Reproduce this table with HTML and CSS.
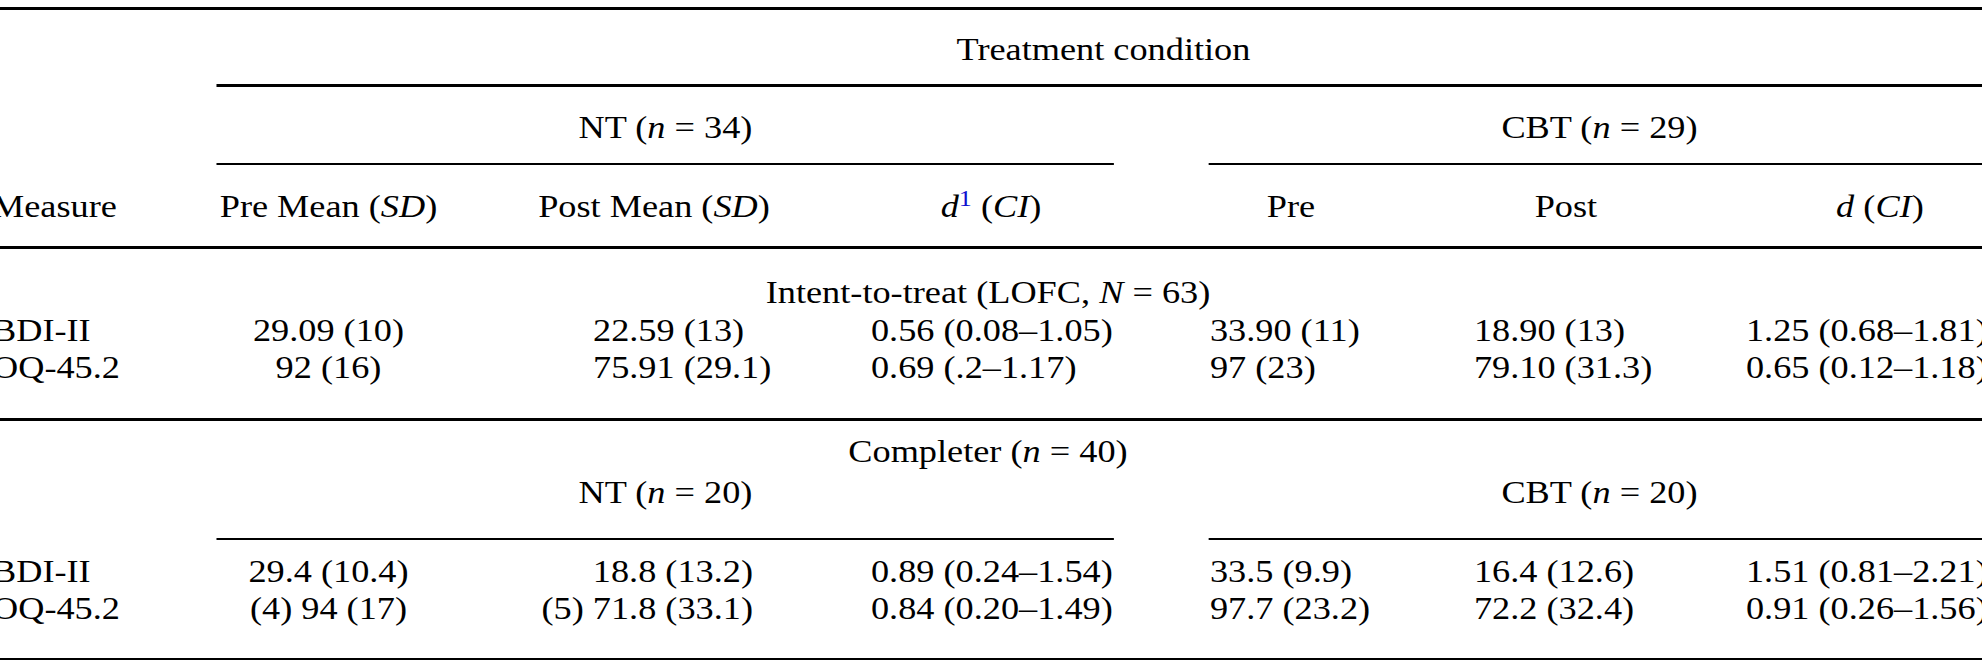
FILE: index.html
```html
<!DOCTYPE html>
<html lang="en">
<head>
<meta charset="utf-8">
<title>Treatment condition results</title>
<link rel="stylesheet" href="styles.css">
</head>
<body>
<div class="page">
  <div class="results">
    <div class="head">
      <div class="grid row-treat">
        <div class="cell"></div>
        <div class="cell span-treat ruled3">Treatment condition</div>
      </div>
      <div class="grid row-group">
        <div class="cell"></div>
        <div class="cell span-nt ruled2">NT (<i>n</i> = 34)</div>
        <div class="cell"></div>
        <div class="cell span-cbt ruled2">CBT (<i>n</i> = 29)</div>
      </div>
      <div class="grid row-cols">
        <div class="cell c-measure">Measure</div>
        <div class="cell c-center">Pre Mean (<i>SD</i>)</div>
        <div class="cell c-center">Post Mean (<i>SD</i>)</div>
        <div class="cell c-center"><i>d</i><sup class="fn">1</sup> (<i>CI</i>)</div>
        <div class="cell"></div>
        <div class="cell c-center">Pre</div>
        <div class="cell c-center h-post2">Post</div>
        <div class="cell c-center h-d2"><i>d</i> (<i>CI</i>)</div>
      </div>
    </div>

    <div class="section itt">
      <div class="caption">Intent-to-treat (LOFC, <i>N</i> = 63)</div>
      <div class="grid data first">
        <div class="cell c-measure">BDI-II</div>
        <div class="cell c-center">29.09 (10)</div>
        <div class="cell post-left">22.59 (13)</div>
        <div class="cell d-left">0.56 (0.08–1.05)</div>
        <div class="cell"></div>
        <div class="cell pre2-left">33.90 (11)</div>
        <div class="cell post2-left">18.90 (13)</div>
        <div class="cell">1.25 (0.68–1.81)</div>
      </div>
      <div class="grid data">
        <div class="cell c-measure">OQ-45.2</div>
        <div class="cell c-center">92 (16)</div>
        <div class="cell post-left">75.91 (29.1)</div>
        <div class="cell d-left">0.69 (.2–1.17)</div>
        <div class="cell"></div>
        <div class="cell pre2-left">97 (23)</div>
        <div class="cell post2-left">79.10 (31.3)</div>
        <div class="cell">0.65 (0.12–1.18)</div>
      </div>
    </div>

    <div class="section completer">
      <div class="caption">Completer (<i>n</i> = 40)</div>
      <div class="grid row-group2">
        <div class="cell"></div>
        <div class="cell span-nt ruled2">NT (<i>n</i> = 20)</div>
        <div class="cell"></div>
        <div class="cell span-cbt ruled2">CBT (<i>n</i> = 20)</div>
      </div>
      <div class="grid data first2">
        <div class="cell c-measure">BDI-II</div>
        <div class="cell c-center">29.4 (10.4)</div>
        <div class="cell post-right">18.8 (13.2)</div>
        <div class="cell d-left">0.89 (0.24–1.54)</div>
        <div class="cell"></div>
        <div class="cell pre2-left">33.5 (9.9)</div>
        <div class="cell post2-left">16.4 (12.6)</div>
        <div class="cell">1.51 (0.81–2.21)</div>
      </div>
      <div class="grid data">
        <div class="cell c-measure">OQ-45.2</div>
        <div class="cell c-center">(4) 94 (17)</div>
        <div class="cell post-right">(5) 71.8 (33.1)</div>
        <div class="cell d-left">0.84 (0.20–1.49)</div>
        <div class="cell"></div>
        <div class="cell pre2-left">97.7 (23.2)</div>
        <div class="cell post2-left">72.2 (32.4)</div>
        <div class="cell">0.91 (0.26–1.56)</div>
      </div>
    </div>
  </div>
</div>
</body>
</html>
```

FILE: styles.css
```css
html, body {
  margin: 0;
  padding: 0;
  background: #ffffff;
  overflow: hidden;
}

.page {
  width: 1982px;
  height: 660px;
  padding-top: 7px;
  box-sizing: border-box;
  overflow: hidden;
}

.results {
  width: 1712.83px;
  margin-left: -14px;
  transform: scaleX(1.17);
  transform-origin: 0 0;
  font-family: "Liberation Serif", "Times New Roman", serif;
  font-size: 31px;
  line-height: 31px;
  color: #000;
}

.results i {
  font-style: italic;
}

.grid {
  display: grid;
  grid-template-columns: 197.44px 190.6px 365.81px 210.26px 81.2px 140.17px 318.8px 208.55px;
}

.cell {
  white-space: nowrap;
}

.head {
  border-top: 3px solid #000;
  border-bottom: 3px solid #000;
}

.row-treat .cell {
  padding-top: 24px;
  padding-bottom: 19px;
}

.span-treat {
  grid-column: 2 / 9;
  text-align: center;
}

.ruled3 {
  border-bottom: 3px solid #000;
}

.ruled2 {
  border-bottom: 2px solid #000;
}

.row-group .cell {
  padding-top: 25px;
  padding-bottom: 20px;
}

.span-nt {
  grid-column: 2 / 5;
  text-align: center;
}

.span-cbt {
  grid-column: 6 / 9;
  text-align: center;
}

.row-cols .cell {
  padding-top: 26px;
  padding-bottom: 24px;
}

.c-measure {
  padding-left: 5.13px;
}

.c-center {
  text-align: center;
}

.h-post2 {
  padding-left: 11.11px;
}

.h-d2 {
  padding-left: 20.51px;
}

.fn {
  font-size: 0.72em;
  line-height: 0;
  vertical-align: 0.48em;
  color: #1010d0;
}

.data {
  line-height: 37px;
}

.itt {
  padding-top: 28px;
  padding-bottom: 32px;
  border-bottom: 3px solid #000;
}

.completer {
  padding-top: 15px;
  padding-bottom: 31px;
  border-bottom: 2px solid #000;
}

.caption {
  text-align: center;
  white-space: nowrap;
}

.data.first {
  margin-top: 4px;
}

.row-group2 {
  margin-top: 10px;
}

.row-group2 .cell {
  padding-bottom: 30px;
}

.data.first2 {
  margin-top: 13px;
}

.post-left {
  padding-left: 130.77px;
}

.post-right {
  text-align: right;
  padding-right: 98.29px;
}

.d-left {
  padding-left: 2.56px;
}

.pre2-left {
  padding-left: 0.85px;
}

.post2-left {
  padding-left: 86.32px;
}
```
